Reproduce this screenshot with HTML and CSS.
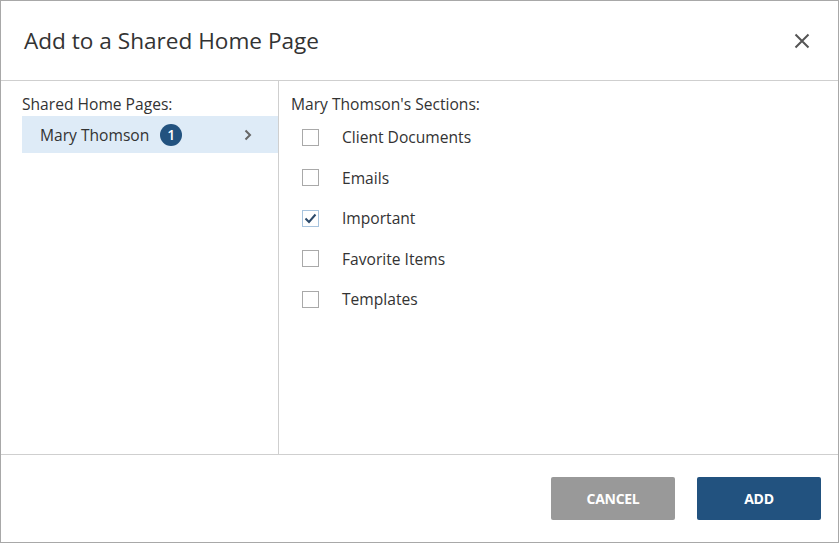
FILE: index.html
```html
<!DOCTYPE html>
<html>
  <head>
    <meta name="viewport" content="width=device-width,initial-scale=1.0">
    <title>Add to a Shared Home Page</title>
    <link rel="stylesheet" href="styles.css">
  </head>
  <body>
    <div class="dialog">
      <div class="dialog-header">
        <div class="dialog-title">Add to a Shared Home Page</div>
        <svg class="close-icon" width="16" height="16" viewBox="0 0 16 16">
          <path d="M1.5 1.5 L14.5 14.5 M14.5 1.5 L1.5 14.5" stroke="#555" stroke-width="2" fill="none"/>
        </svg>
      </div>

      <div class="dialog-body">
        <div class="pages-column">
          <div class="column-label">Shared Home Pages:</div>
          <div class="page-row selected">
            <span class="page-name">Mary Thomson</span>
            <span class="badge">1</span>
            <svg class="chevron" width="8" height="12" viewBox="0 0 8 12">
              <path d="M1.5 1.5 L6 6 L1.5 10.5" stroke="#666" stroke-width="2" fill="none"/>
            </svg>
          </div>
        </div>

        <div class="sections-column">
          <div class="column-label">Mary Thomson's Sections:</div>
          <div class="section-list">
            <div class="section-row">
              <span class="checkbox"></span>
              <span class="section-name">Client Documents</span>
            </div>
            <div class="section-row">
              <span class="checkbox"></span>
              <span class="section-name">Emails</span>
            </div>
            <div class="section-row">
              <span class="checkbox checked">
                <svg width="13" height="11" viewBox="0 0 13 11">
                  <path d="M1.5 5.5 L5 9 L11.5 1.5" stroke="#2c4a6b" stroke-width="2" fill="none"/>
                </svg>
              </span>
              <span class="section-name">Important</span>
            </div>
            <div class="section-row">
              <span class="checkbox"></span>
              <span class="section-name">Favorite Items</span>
            </div>
            <div class="section-row">
              <span class="checkbox"></span>
              <span class="section-name">Templates</span>
            </div>
          </div>
        </div>
      </div>

      <div class="dialog-footer">
        <button class="button button-cancel">CANCEL</button>
        <button class="button button-add">ADD</button>
      </div>
    </div>
  </body>
</html>
```

FILE: styles.css
```css
body {
  margin: 0;
  padding: 0;
  font-family: 'Open Sans', 'Liberation Sans', sans-serif;
  color: #333;
  background: #fff;
}

.dialog {
  width: 839px;
  height: 543px;
  box-sizing: border-box;
  border: 1px solid #a8a8a8;
  display: flex;
  flex-direction: column;
}

.dialog-header {
  height: 79px;
  border-bottom: 1px solid #cfcfcf;
  display: flex;
  align-items: center;
  padding: 0 28px 0 23px;
}

.dialog-title {
  flex: 1;
  font-size: 22.6px;
  color: #333;
  padding-bottom: 1px;
}

.close-icon {
  display: block;
}

.dialog-body {
  height: 373px;
  display: flex;
}

.pages-column {
  width: 256px;
  padding: 13px 0 0 21px;
  border-right: 1px solid #cfcfcf;
}

.column-label {
  font-size: 15.6px;
  line-height: 21px;
  color: #333;
}

.page-row {
  height: 37px;
  margin-top: 1px;
  display: flex;
  align-items: center;
  padding: 0 26px 0 18px;
  font-size: 15.6px;
}

.page-row.selected {
  background: #deebf7;
}

.badge {
  width: 22px;
  height: 22px;
  border-radius: 50%;
  background: #22527f;
  color: #fff;
  font-size: 14px;
  font-weight: 600;
  display: flex;
  align-items: center;
  justify-content: center;
  margin-left: 11px;
}

.chevron {
  margin-left: auto;
  display: block;
}

.sections-column {
  flex: 1;
  padding: 13px 0 0 12px;
}

.section-list {
  padding: 2px 0 0 11px;
}

.section-row {
  height: 40.5px;
  display: flex;
  align-items: center;
  font-size: 15.6px;
}

.checkbox {
  width: 15px;
  height: 15px;
  border: 1px solid #a9a9a9;
  background: #fff;
  display: flex;
  align-items: center;
  justify-content: center;
  margin-right: 23px;
}

.checkbox.checked {
  border-color: #a8c4de;
}

.dialog-footer {
  flex: 1;
  border-top: 1px solid #cfcfcf;
  display: flex;
  justify-content: flex-end;
  align-items: flex-start;
  gap: 22px;
  padding: 22px 17px 0 0;
}

.button {
  width: 124px;
  height: 43px;
  border: none;
  border-radius: 2px;
  color: #fff;
  font-family: 'Open Sans', 'Liberation Sans', sans-serif;
  font-size: 14px;
  font-weight: 700;
  letter-spacing: -0.3px;
  cursor: pointer;
}

.button-cancel {
  background: #999;
}

.button-add {
  background: #22527f;
}
```
